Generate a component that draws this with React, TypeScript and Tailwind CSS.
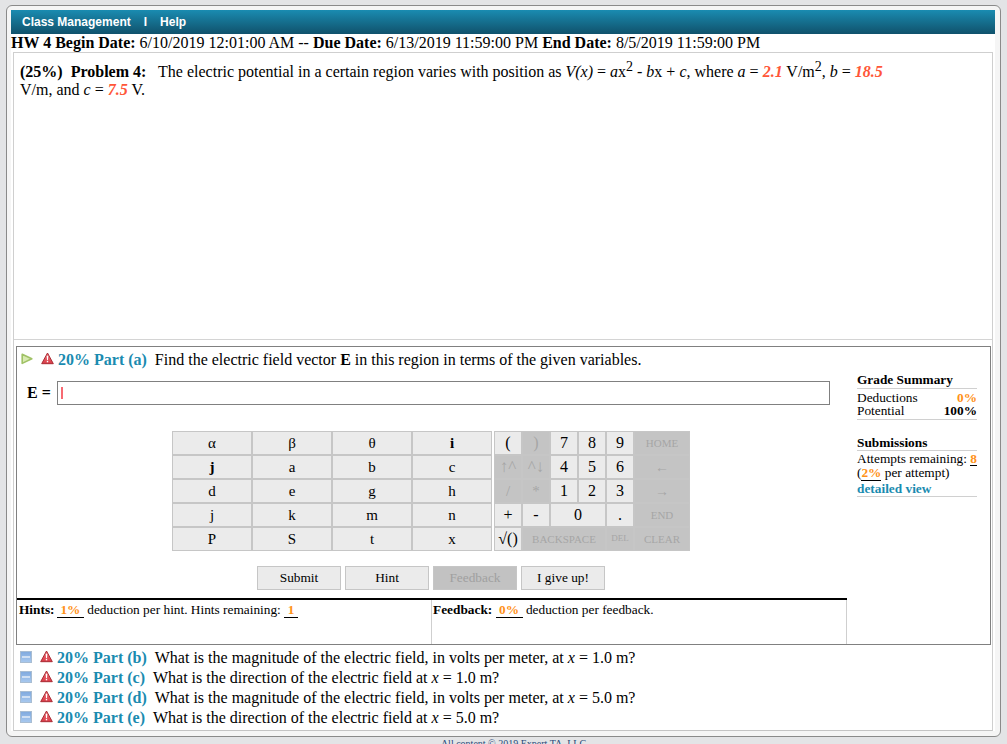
import React from "react";

const Warn = () => (
  <svg width="13" height="13" viewBox="0 0 13 13" className="shrink-0 block">
    <defs>
      <linearGradient id="wg" x1="0" y1="0" x2="0" y2="1">
        <stop offset="0" stopColor="#f0787e" />
        <stop offset="1" stopColor="#d83a46" />
      </linearGradient>
    </defs>
    <path d="M6.5 1 L12.3 11.7 L0.7 11.7 Z" fill="url(#wg)" stroke="#a82a33" strokeWidth="1" strokeLinejoin="round" />
    <path d="M5.7 3.8 H7.3 L7 8 H6 Z" fill="#fff" />
    <rect x="5.8" y="8.8" width="1.4" height="1.5" fill="#fff" />
  </svg>
);

const Play = () => (
  <svg width="12" height="12" viewBox="0 0 12 12" className="shrink-0 block">
    <path d="M1.2 1.2 L10.8 5.8 L1.2 10.4 Z" fill="#d8eab0" stroke="#a0c266" strokeWidth="1.6" strokeLinejoin="round" />
  </svg>
);

const Minus = () => (
  <svg width="12" height="12" viewBox="0 0 12 12" className="shrink-0 block">
    <defs>
      <linearGradient id="mb" x1="0" y1="0" x2="0" y2="1">
        <stop offset="0" stopColor="#7fa9de" />
        <stop offset="1" stopColor="#a9c9ee" />
      </linearGradient>
    </defs>
    <rect x="0.5" y="0.5" width="11" height="11" fill="url(#mb)" stroke="#a9bdd2" />
    <rect x="2" y="5" width="8" height="2" fill="#cfdff3" />
  </svg>
);

const Key = ({ children, dim, wide, bold, cls }: { children: React.ReactNode; dim?: boolean; wide?: boolean; bold?: boolean; cls?: string }) => (
  <div
    className={
      "flex items-center justify-center h-[24px] border border-[#c6c6c6] " +
      (dim ? "bg-[#c4c4c4] text-[#a6a6a6] " : "bg-[#ebebeb] text-black ") +
      (wide ? "col-span-3 " : "") +
      (bold ? "font-bold " : "") +
      (cls ?? "")
    }
  >
    {children}
  </div>
);

const left = ["α", "β", "θ", "i", "j", "a", "b", "c", "d", "e", "g", "h", "j", "k", "m", "n", "P", "S", "t", "x"];

const Part = ({ letter, text, x }: { letter: string; text: string; x: string }) => (
  <div className="flex items-center h-[20px] pl-[6px] text-[16px]">
    <span className="mb-[3px]"><Minus /></span>
    <span className="ml-[8px] mb-[3px]"><Warn /></span>
    <span className="ml-[4px] font-bold text-[#1a8bb0]">20% Part ({letter})</span>
    <span className="ml-[8px]">
      {text} <i>x</i> = {x} m?
    </span>
  </div>
);

const Btn = ({ children, dim }: { children: React.ReactNode; dim?: boolean }) => (
  <div className={"w-[84px] h-[24px] flex items-center justify-center border border-[#c6c6c6] text-[13.33px] " + (dim ? "bg-[#c2c2c2] text-[#a0a0a0]" : "bg-[#ebebeb]")}>
    {children}
  </div>
);

const Orange = ({ children, cls }: { children: React.ReactNode; cls?: string }) => (
  <span className={"font-bold text-[#ff9219] inline-block border-b border-black leading-[14px] " + (cls ?? "")}>{children}</span>
);

export default function App() {
  return (
    <div className="h-[744px] overflow-hidden bg-[#e3e4e6] pt-[5px] pl-[6px] text-black font-['Liberation_Serif',serif]">
      <div className="w-[995px] h-[732px] border border-[#8a8a8a] rounded-[6px] bg-[#f5f5f5] pt-[4px] pl-[4px]">
        <div className="w-[984px] h-[721px] bg-white">
          <div className="h-[24px] flex items-center pl-[11px] gap-[13px] bg-gradient-to-b from-[#1a8cb1] to-[#10526c] text-white text-[12px] font-bold font-['Liberation_Sans',sans-serif]">
            <span>Class Management</span>
            <span>I</span>
            <span>Help</span>
          </div>
          <div className="h-[18px] leading-[18px] text-[16px] whitespace-nowrap">
            <b>HW 4 Begin Date:</b> 6/10/2019 12:01:00 AM -- <b>Due Date:</b> 6/13/2019 11:59:00 PM <b>End Date:</b> 8/5/2019 11:59:00 PM
          </div>
          <div className="ml-[2px] w-[980px] h-[679px] border border-[#cfcfcf] border-b-[#c4c4c4]">
            <div className="h-[287px] border-b border-[#d4d4d4] pt-[10px] pl-[6px] pr-[8px] text-[16px] leading-[18px]">
              <b>(25%)&nbsp; Problem 4:</b>&nbsp;&nbsp; The electric potential in a certain region varies with position as <i>V(x)</i> = <i>a</i>x<sup className="text-[14px] -top-[6px]">2</sup> - <i>b</i>x + <i>c</i>, where <i>a</i> = <b className="italic text-[#ff5638]">2.1</b> V/m<sup className="text-[14px] -top-[6px]">2</sup>, <i>b</i> = <b className="italic text-[#ff5638]">18.5</b>
              <br />
              V/m, and <i>c</i> = <b className="italic text-[#ff5638]">7.5</b> V.
            </div>
            <div className="ml-[2px] mt-[6px] w-[975px] h-[299px] border border-[#808080] flex flex-col">
              <div className="flex">
                <div className="w-[830px]">
                  <div className="flex items-center h-[26px] pl-[4px] text-[16px]">
                    <span className="mb-[2px]"><Play /></span>
                    <span className="ml-[8px] mb-[3px]"><Warn /></span>
                    <span className="ml-[4px] font-bold text-[#1a8bb0]">20% Part (a)</span>
                    <span className="ml-[8px]">Find the electric field vector <b>E</b> in this region in terms of the given variables.</span>
                  </div>
                  <div className="flex items-center h-[24px] mt-[8px] pl-[10px] text-[16px]">
                    <b>E =</b>
                    <div className="ml-[6px] w-[773px] h-[24px] border border-[#808080] flex items-center pl-[3px]">
                      <div className="w-[2px] h-[12px] bg-[#f76a72]" />
                    </div>
                  </div>
                  <div className="flex mt-[26px] ml-[155px] gap-[2px] text-[15px]">
                    <div className="grid grid-cols-[repeat(4,80px)] w-[320px]">
                      {left.map((k, i) => (
                        <Key key={i} bold={i === 3 || i === 4}>{k}</Key>
                      ))}
                    </div>
                    <div className="grid grid-cols-[repeat(5,28px)_56px] w-[196px]">
                      <Key cls="text-[16px]">(</Key>
                      <Key dim cls="text-[16px]">)</Key>
                      <Key cls="text-[16px]">7</Key>
                      <Key cls="text-[16px]">8</Key>
                      <Key cls="text-[16px]">9</Key>
                      <Key dim cls="text-[11px]">HOME</Key>
                      <Key dim cls="text-[17px]">↑^</Key>
                      <Key dim cls="text-[17px]">^↓</Key>
                      <Key cls="text-[16px]">4</Key>
                      <Key cls="text-[16px]">5</Key>
                      <Key cls="text-[16px]">6</Key>
                      <Key dim cls="text-[14px]">←</Key>
                      <Key dim>/</Key>
                      <Key dim>*</Key>
                      <Key cls="text-[16px]">1</Key>
                      <Key cls="text-[16px]">2</Key>
                      <Key cls="text-[16px]">3</Key>
                      <Key dim cls="text-[14px]">→</Key>
                      <Key cls="text-[16px]">+</Key>
                      <Key cls="text-[16px]">-</Key>
                      <div className="col-span-2 flex items-center justify-center h-[24px] border border-[#c6c6c6] bg-[#ebebeb] text-[16px]">0</div>
                      <Key cls="text-[16px]">.</Key>
                      <Key dim cls="text-[11px]">END</Key>
                      <Key cls="text-[16px]">√()</Key>
                      <Key dim wide cls="text-[11px]">BACKSPACE</Key>
                      <Key dim cls="text-[9px]">DEL</Key>
                      <Key dim cls="text-[11px]">CLEAR</Key>
                    </div>
                  </div>
                  <div className="flex gap-[4px] mt-[15px] ml-[240px]">
                    <Btn>Submit</Btn>
                    <Btn>Hint</Btn>
                    <Btn dim>Feedback</Btn>
                    <Btn>I give up!</Btn>
                  </div>
                </div>
                <div className="ml-[10px] w-[120px] pt-[26px] text-[13.33px] leading-[14px]">
                  <div className="font-bold border-b border-[#d0d0d0] h-[16px]">Grade Summary</div>
                  <div className="flex justify-between h-[13px] mt-[2px]"><span>Deductions</span><b className="text-[#ff9219]">0%</b></div>
                  <div className="flex justify-between h-[16px] border-b border-[#d0d0d0]"><span>Potential</span><b>100%</b></div>
                  <div className="font-bold border-b border-[#d0d0d0] h-[15px] mt-[16px]">Submissions</div>
                  <div className="flex justify-between h-[14px] mt-[1px]"><span>Attempts remaining:</span><Orange>8</Orange></div>
                  <div className="h-[16px]">(<Orange>2%</Orange> per attempt)</div>
                  <div className="font-bold text-[#1a8bb0] h-[15px] border-b border-[#d0d0d0]">detailed view</div>
                </div>
              </div>
              <div className="mt-[8px] w-[830px] h-[46px] border-t-2 border-black flex text-[13.33px] leading-[15px]">
                <div className="w-[415px] border-r border-[#cfcfcf] pl-[2px] pt-[2px] whitespace-nowrap">
                  <b>Hints:</b> <Orange cls="w-[27px] text-center -ml-px">1%</Orange> deduction per hint. Hints remaining: <Orange cls="w-[14px] text-center">1</Orange>
                </div>
                <div className="w-[415px] border-r border-[#cfcfcf] pl-[1px] pt-[2px] whitespace-nowrap">
                  <b>Feedback:</b> <Orange cls="w-[27px] text-center">0%</Orange> deduction per feedback.
                </div>
              </div>
            </div>
            <div className="mt-[3px]">
              <Part letter="b" text="What is the magnitude of the electric field, in volts per meter, at" x="1.0" />
              <Part letter="c" text="What is the direction of the electric field at" x="1.0" />
              <Part letter="d" text="What is the magnitude of the electric field, in volts per meter, at" x="5.0" />
              <Part letter="e" text="What is the direction of the electric field at" x="5.0" />
            </div>
          </div>
        </div>
      </div>
      <div className="w-[995px] text-center text-[10px] leading-[12px] text-[#2a4a7a] mt-[1px] pl-[20px]">All content © 2019 Expert TA, LLC</div>
    </div>
  );
}
